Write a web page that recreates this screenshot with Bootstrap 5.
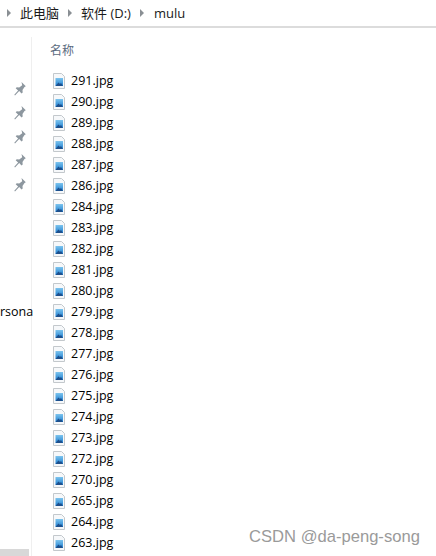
<!DOCTYPE html>
<html lang="zh">
  <head>
    <meta charset="UTF-8" />
    <meta name="viewport" content="width=device-width, initial-scale=1.0" />
    <title>mulu</title>
    <link
      rel="stylesheet"
      href="https://cdn.jsdelivr.net/npm/bootstrap@5.3.0/dist/css/bootstrap.min.css"
    />
    <style>
      html, body { height: 100%; }
      body {
        width: 436px; height: 556px; overflow: hidden; background: #fff; color: #000;
        font-family: "Open Sans", "Noto Sans CJK SC", sans-serif; font-size: 12.5px; line-height: 21px;
      }
      .crumbs { height: 28px; padding-left: 5px; border-bottom: 2px solid #dcdcdc; gap: 7px; color: #1a1a1a; font-size: 13px; }
      .crumb-sep { width: 6px; height: 8px; fill: #8a8f94; margin: 0 1px; }
      .crumb-last { margin-left: 1px; }
      .main-wrap { height: 528px; position: relative; }
      .side-pane { width: 32px; border-right: 1px solid #efefef; margin-top: 9px; position: relative; }
      .pin-list { margin-top: 44px; padding-left: 14px; gap: 8px; }
      .pin-ico { width: 12px; height: 16px; fill: #8d979f; display: block; }
      .cut-label { position: absolute; left: 0; top: 267px; white-space: nowrap; line-height: 16px; }
      .side-block { position: absolute; left: 0; bottom: 0; width: 29px; height: 7px; background: #d8d8d8; }
      .file-pane { padding-left: 18px; }
      .col-name { color: #5b6b80; height: 42px; line-height: 45px; font-size: 12px; }
      .file-row { height: 21px; gap: 6px; padding-left: 3px; white-space: nowrap; }
      .file-ico { width: 12px; height: 16px; flex: none; }
      .wm { position: absolute; left: 249px; top: 528px; color: #9a9a9a; font-family: "Liberation Sans", sans-serif; font-size: 16.6px; line-height: 18px; }
    </style>
  </head>
  <body>
    <div class="crumbs d-flex align-items-center">
      <svg class="crumb-sep" viewBox="0 0 6 8"><path d="M1 0l4 4-4 4z" /></svg>
      <span>此电脑</span>
      <svg class="crumb-sep" viewBox="0 0 6 8"><path d="M1 0l4 4-4 4z" /></svg>
      <span>软件 (D:)</span>
      <svg class="crumb-sep" viewBox="0 0 6 8"><path d="M1 0l4 4-4 4z" /></svg>
      <span class="crumb-last">mulu</span>
    </div>
    <div class="main-wrap d-flex">
      <div class="side-pane">
        <div id="pins" class="pin-list d-flex flex-column"></div>
        <div class="cut-label">rsona</div>
        <div class="side-block"></div>
      </div>
      <div class="file-pane flex-grow-1">
        <div class="col-name">名称</div>
        <div id="files"></div>
      </div>
    </div>
    <div class="wm">CSDN @da-peng-song</div>

    <script>
      const names = [291, 290, 289, 288, 287, 286, 284, 283, 282, 281, 280, 279, 278, 277, 276, 275, 274, 273, 272, 270, 265, 264, 263, ""];
      const fileIcon = `<svg class="file-ico" viewBox="0 0 12 16">
        <defs><linearGradient id="pic" x1="0" y1="0" x2="0" y2="1"><stop offset="0" stop-color="#7cc4ee" /><stop offset="1" stop-color="#1f7fd0" /></linearGradient></defs>
        <path d="M.5.5h8l3 3v12H.5z" fill="#f6f8fa" stroke="#c3c8cc" />
        <rect x="2.500" y="5" width="7.500" height="8" fill="url(#pic)" />
        <path d="M2.500 13l3-3.500 1.500 1.400 1-.8 2 2.900z" fill="#1d4f8c" />
      </svg>`;
      const pinIcon = `<svg class="pin-ico" viewBox="0 0 12 16"><path d="M7.500 1l4.300 4.300-1.300.7-2 3 .2 2.400-1.200 1.100-2.300-2.400L1 14.500l-.7-.7 3.800-4.200-2.400-2.300 1.100-1.100 2.400.2 3-2.200z" /></svg>`;
      document.getElementById("files").innerHTML = names
        .map((n) => `<div class="file-row d-flex align-items-center">${fileIcon}<span>${n ? n + ".jpg" : ""}</span></div>`)
        .join("");
      document.getElementById("pins").innerHTML = pinIcon.repeat(5);
    </script>
    <script src="https://cdn.jsdelivr.net/npm/bootstrap@5.3.0/dist/js/bootstrap.bundle.min.js"></script>
  </body>
</html>
